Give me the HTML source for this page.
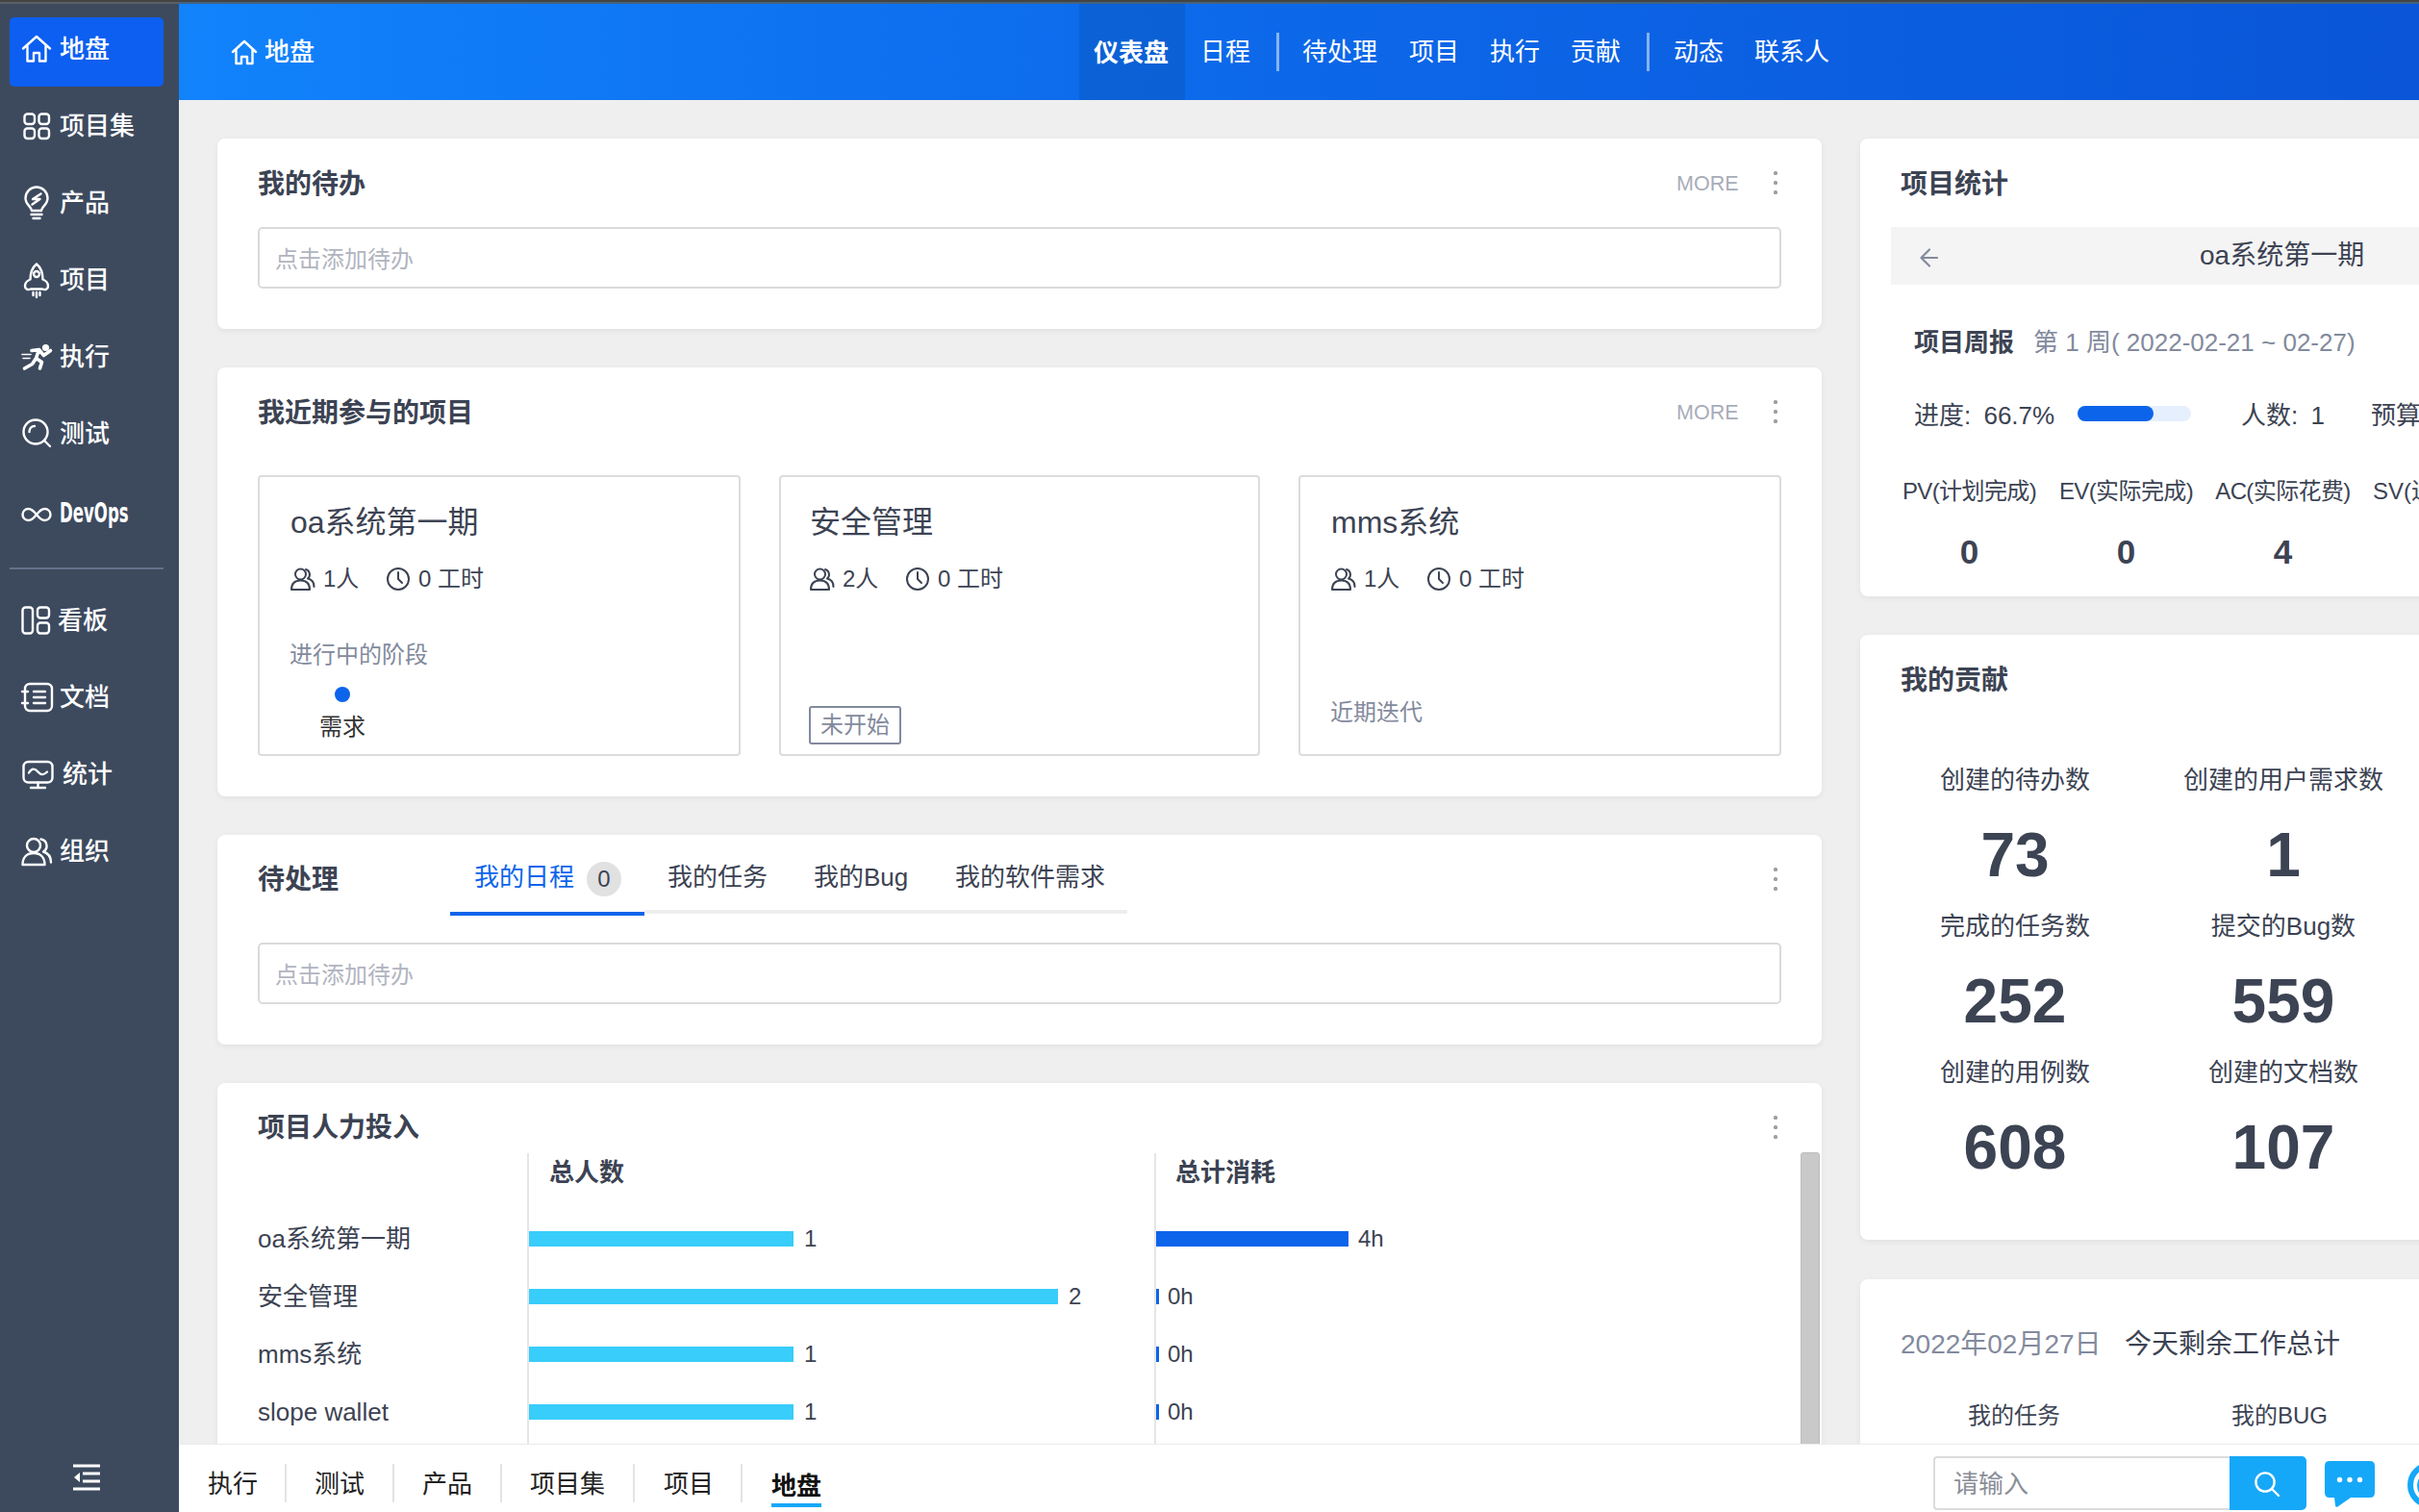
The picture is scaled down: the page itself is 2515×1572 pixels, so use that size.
<!DOCTYPE html>
<html lang="zh-CN">
<head>
<meta charset="utf-8">
<title>地盘</title>
<style>
*{box-sizing:border-box;margin:0;padding:0}
html,body{width:2515px;height:1572px;overflow:hidden;background:#efefef}
body{font-family:"Liberation Sans","Noto Sans CJK SC",sans-serif;color:#3c4353;font-size:26px;position:relative}
.abs{position:absolute;white-space:nowrap}
#topline{position:absolute;left:0;top:0;width:2515px;height:2px;background:#444442;z-index:20}
#topline:before{content:'';position:absolute;left:0;top:2px;width:186px;height:2px;background:#5b5f68}
#topline:after{content:'';position:absolute;left:186px;top:2px;width:2329px;height:1.5px;background:#44627f}
#side{position:absolute;left:0;top:0;width:186px;height:1572px;background:#3d4a5e;z-index:10}
#side .it{position:absolute;left:10px;width:160px;height:72px;border-radius:5px;color:#fff;font-size:26px;font-weight:500}
#side .it.act{background:#0c5ff0}
#side .it svg{position:absolute;left:12px;top:17px;width:32px;height:32px;overflow:visible;fill:none;stroke:#fff;stroke-width:2.4;stroke-linecap:round;stroke-linejoin:round}
#side .it span{position:absolute;left:52px;top:0;line-height:67px;white-space:nowrap}
#side .div{position:absolute;left:10px;top:590px;width:160px;height:2px;background:#64708a}
#head{position:absolute;left:186px;top:0;width:2329px;height:104px;background:linear-gradient(90deg,#1183fb 0%,#0d6cec 40%,#0a55d8 100%);z-index:5;color:#fff}
#head .t{position:absolute;top:2px;line-height:104px;font-size:26px;white-space:nowrap}
#head .sep{position:absolute;top:34px;width:3px;height:40px;background:rgba(255,255,255,.5)}
.panel{position:absolute;background:#fff;border-radius:8px;box-shadow:0 2px 6px rgba(0,0,0,.06)}
.ptitle{position:absolute;left:42px;top:28px;font-size:28px;font-weight:bold;line-height:40px;color:#3c4353;white-space:nowrap}
.more{position:absolute;font-size:21.5px;color:#a8acb9;line-height:40px;top:27px;letter-spacing:0}
.dots{position:absolute;width:6px}
.dots i{display:block;width:4.4px;height:4.4px;border-radius:1.5px;background:#9d9da6;margin-bottom:5.6px}
.inp{position:absolute;left:42px;width:1584px;height:64px;border:2px solid #dadada;border-radius:5px;background:#fff;font-size:24px;color:#b1b4c0;line-height:64px;padding-left:16px}
.card{position:absolute;top:112px;width:502px;height:292px;border:2px solid #dcdcdc;border-radius:4px;background:#fff}
.card .ct{position:absolute;left:32px;top:25px;font-size:32px;line-height:44px;color:#3c4353;white-space:nowrap}
.card .meta{position:absolute;left:32px;top:89px;font-size:24px;line-height:34px;color:#3c4353;white-space:nowrap}
.card svg{position:absolute;fill:none;stroke:#3c4353;stroke-width:2;stroke-linecap:round;stroke-linejoin:round}
.muted{color:#838a9d}
#bot{position:absolute;left:186px;top:1501px;width:2329px;height:71px;background:#fff;z-index:8;border-top:1.5px solid #ebebeb}
#bot .bt{position:absolute;top:15.5px;line-height:50px;font-size:26px;color:#222;white-space:nowrap}
#bot .bs{position:absolute;top:20px;width:2px;height:40px;background:#e3e3e3}
</style>
</head>
<body>
<div id="topline"></div>

<!-- SIDEBAR -->
<div id="side">
  <div class="it act" style="top:18px"><svg viewBox="0 0 32 32"><path d="M2 15.5 L16 3 L30 15.5 M6.5 12.5 V28.5 H13 V20 H19 V28.5 H25.5 V12.5"/></svg><span>地盘</span></div>
  <div class="it" style="top:98px"><svg viewBox="0 0 32 32"><rect x="3.5" y="3.5" width="10.5" height="10.5" rx="3"/><rect x="18.5" y="3.5" width="10.5" height="10.5" rx="3"/><rect x="3.5" y="18.5" width="10.5" height="10.5" rx="3"/><rect x="18.5" y="18.5" width="10.5" height="10.5" rx="3"/></svg><span>项目集</span></div>
  <div class="it" style="top:178px"><svg viewBox="0 0 32 32"><path d="M11 24 C11 20 4.5 18 4.5 11 A11.5 11.5 0 0 1 27.500 11 C27.500 18 21 20 21 24 Z M10.500 28 H21.500 M12.500 32 H19.500"/><path d="M20.500 6.500 L12 12 H19.500 L11.500 17.500"/></svg><span>产品</span></div>
  <div class="it" style="top:258px"><svg viewBox="0 0 32 32"><path d="M16 -0.500 C10.500 4 9.500 10 9.500 15.500 C5.500 17 4 19.500 4 22.500 C4 25.500 7 27 10 25.500 H22 C25 27 28 25.500 28 22.500 C28 19.500 26.500 17 22.500 15.500 C22.500 10 21.500 4 16 -0.500 Z"/><circle cx="16" cy="10" r="3"/><path d="M12.500 29 V32 M16 29 V34 M19.500 29 V32"/></svg><span>项目</span></div>
  <div class="it" style="top:338px"><svg viewBox="0 0 32 32"><circle cx="25.500" cy="6.500" r="3.600" fill="#fff" stroke="none"/><path d="M11 9.500 L18.500 8.500 L23.500 14.500 L30.500 9.500 M18.500 8.500 L15.500 17.500 L21.500 21.500 L19.500 28 M15.500 17.500 L11.500 23.500 L3.500 28" stroke-width="3.600"/><path d="M1 13.500 H10 M2 17.500 H9" stroke-width="1.600"/></svg><span>执行</span></div>
  <div class="it" style="top:418px"><svg viewBox="0 0 32 32"><circle cx="15" cy="14" r="12.500"/><path d="M24 23 L30 29 M8.500 14 C8.500 10.500 11 8 14 8"/></svg><span>测试</span></div>
  <div class="it" style="top:502px"><svg viewBox="0 0 32 32"><path d="M16 16 C12 11 9.500 10 7.500 10 A6 6 0 0 0 7.500 22 C9.500 22 12 21 16 16 C20 11 22.500 10 24.500 10 A6 6 0 0 1 24.500 22 C22.500 22 20 21 16 16 Z"/></svg><span style="font-family:'DejaVu Sans Condensed','Liberation Sans',sans-serif;font-weight:bold;font-size:29px;top:-2px;transform:scaleX(.635);transform-origin:0 50%">DevOps</span></div>
  <div class="div"></div>
  <div class="it" style="top:612px"><svg viewBox="0 0 32 32"><rect x="1.500" y="2.500" width="10.500" height="27" rx="3"/><rect x="17" y="2.500" width="12" height="11" rx="3"/><rect x="17" y="18.500" width="12" height="11" rx="3"/></svg><span style="left:50px">看板</span></div>
  <div class="it" style="top:692px"><svg viewBox="0 0 32 32"><rect x="4" y="2" width="28" height="28" rx="5"/><path d="M1 10 H7 M1 22 H7 M13 10 H25 M13 16 H25 M13 22 H25"/></svg><span>文档</span></div>
  <div class="it" style="top:772px"><svg viewBox="0 0 32 32"><rect x="2.500" y="3" width="30" height="21.500" rx="5"/><path d="M17.500 24.500 V29.500 M10 30 H25 M8 14.500 C11 9.500 14 9.500 17.500 13.500 C21 17.500 24 16.500 27 13.500"/></svg><span style="left:55px">统计</span></div>
  <div class="it" style="top:852px"><svg viewBox="0 0 32 32"><circle cx="13" cy="10" r="7"/><path d="M1.500 30 C1.500 22 6 18 13 18 C20 18 24.500 22 24.500 30 Z M20.500 3.500 A7 7 0 0 1 23 16.500 C28 18 31 21.500 31 27.500"/></svg><span>组织</span></div>
  <svg class="abs" style="left:76px;top:1522px" width="28" height="28" viewBox="0 0 28 28"><path d="M0 2 H28 M10 10 H28 M10 18 H28 M0 26 H28" stroke="#fff" stroke-width="3" fill="none"/><path d="M7 9 V19 L1 14 Z" fill="#fff"/></svg>
</div>

<!-- HEADER -->
<div id="head">
  <svg class="abs" style="left:54px;top:41px" width="28" height="27" viewBox="0 0 28 27" fill="none" stroke="#fff" stroke-width="2.4" stroke-linecap="round" stroke-linejoin="round"><path d="M2 13 L14 2 L26 13 M5.5 10.5 V25 H11 V18 H17 V25 H22.5 V10.5"/></svg>
  <div class="t" style="left:89px;top:2px;font-weight:500">地盘</div>
  <div style="position:absolute;left:936px;top:0;width:110px;height:104px;background:rgba(0,0,0,.09)"></div>
  <div class="t" style="left:951px;top:3px;font-weight:bold">仪表盘</div>
  <div class="t" style="left:1062px">日程</div>
  <div class="sep" style="left:1141px"></div>
  <div class="t" style="left:1168px">待处理</div>
  <div class="t" style="left:1279px">项目</div>
  <div class="t" style="left:1363px">执行</div>
  <div class="t" style="left:1447px">贡献</div>
  <div class="sep" style="left:1526px"></div>
  <div class="t" style="left:1554px">动态</div>
  <div class="t" style="left:1638px">联系人</div>
</div>

<!-- LEFT PANELS -->
<div class="panel" id="p1" style="left:226px;top:144px;width:1668px;height:198px">
  <div class="ptitle">我的待办</div>
  <div class="more" style="left:1517px">MORE</div>
  <div class="dots" style="left:1617.8px;top:34px"><i></i><i></i><i></i></div>
  <div class="inp" style="top:92px">点击添加待办</div>
</div>

<div class="panel" id="p2" style="left:226px;top:382px;width:1668px;height:446px">
  <div class="ptitle">我近期参与的项目</div>
  <div class="more" style="left:1517px">MORE</div>
  <div class="dots" style="left:1617.8px;top:34px"><i></i><i></i><i></i></div>
  <div class="card" style="left:42px">
    <div class="ct">oa系统第一期</div>
    <svg style="left:32px;top:93px" width="26" height="26" viewBox="0 0 26 26"><circle cx="10.5" cy="8" r="5.5"/><path d="M1 24 C1 17 5 14.5 10.5 14.5 C16 14.5 20 17 20 24 Z M16 3 A5.5 5.5 0 0 1 18 12.5 C22 13.5 24.5 16.5 24.5 21"/></svg>
    <div class="meta" style="left:66px">1人</div>
    <svg style="left:131px;top:93px" width="26" height="26" viewBox="0 0 26 26"><circle cx="13" cy="13" r="11"/><path d="M13 6 V13 L17 17"/></svg>
    <div class="meta" style="left:165px">0 工时</div>
    <div class="abs muted" style="left:31px;top:168px;font-size:24px;line-height:34px">进行中的阶段</div>
    <div class="abs" style="left:78px;top:218px;width:16px;height:16px;border-radius:50%;background:#0c64eb"></div>
    <div class="abs" style="left:62px;top:243px;font-size:24px;line-height:34px;color:#333">需求</div>
  </div>
  <div class="card" style="left:584px;width:500px">
    <div class="ct" style="left:30px">安全管理</div>
    <svg style="left:30px;top:93px" width="26" height="26" viewBox="0 0 26 26"><circle cx="10.5" cy="8" r="5.5"/><path d="M1 24 C1 17 5 14.5 10.5 14.5 C16 14.5 20 17 20 24 Z M16 3 A5.5 5.5 0 0 1 18 12.5 C22 13.5 24.5 16.5 24.5 21"/></svg>
    <div class="meta" style="left:64px">2人</div>
    <svg style="left:129px;top:93px" width="26" height="26" viewBox="0 0 26 26"><circle cx="13" cy="13" r="11"/><path d="M13 6 V13 L17 17"/></svg>
    <div class="meta" style="left:163px">0 工时</div>
    <div class="abs muted" style="left:29px;top:238px;height:40px;border:2px solid #838a9d;border-radius:3px;font-size:24px;line-height:36px;padding:0 10px">未开始</div>
  </div>
  <div class="card" style="left:1124px;width:502px">
    <div class="ct">mms系统</div>
    <svg style="left:32px;top:93px" width="26" height="26" viewBox="0 0 26 26"><circle cx="10.5" cy="8" r="5.5"/><path d="M1 24 C1 17 5 14.5 10.5 14.5 C16 14.5 20 17 20 24 Z M16 3 A5.5 5.5 0 0 1 18 12.5 C22 13.5 24.5 16.5 24.5 21"/></svg>
    <div class="meta" style="left:66px">1人</div>
    <svg style="left:131px;top:93px" width="26" height="26" viewBox="0 0 26 26"><circle cx="13" cy="13" r="11"/><path d="M13 6 V13 L17 17"/></svg>
    <div class="meta" style="left:165px">0 工时</div>
    <div class="abs muted" style="left:31px;top:228px;font-size:24px;line-height:34px">近期迭代</div>
  </div>
</div>

<div class="panel" id="p3" style="left:226px;top:868px;width:1668px;height:218px">
  <div class="ptitle" style="top:27px">待处理</div>
  <div class="abs" style="left:267px;top:23.5px;font-size:26px;line-height:40px;color:#0c64eb">我的日程</div>
  <div class="abs" style="left:384px;top:28px;width:36px;height:36px;border-radius:18px;background:#e1e1e1;color:#3c4353;font-size:24px;line-height:36px;text-align:center">0</div>
  <div class="abs" style="left:468px;top:23.5px;font-size:26px;line-height:40px">我的任务</div>
  <div class="abs" style="left:620px;top:23.5px;font-size:26px;line-height:40px">我的Bug</div>
  <div class="abs" style="left:767px;top:23.5px;font-size:26px;line-height:40px">我的软件需求</div>
  <div class="abs" style="left:444px;top:78px;width:502px;height:4px;background:#eee"></div>
  <div class="abs" style="left:242px;top:80px;width:202px;height:4px;background:#0c64eb"></div>
  <div class="dots" style="left:1617.8px;top:34px"><i></i><i></i><i></i></div>
  <div class="inp" style="top:112px">点击添加待办</div>
</div>

<div class="panel" id="p4" style="left:226px;top:1126px;width:1668px;height:460px">
  <div class="ptitle" style="top:27px">项目人力投入</div>
  <div class="dots" style="left:1617.8px;top:34px"><i></i><i></i><i></i></div>
  <div class="abs" style="left:322px;top:73px;width:2px;height:400px;background:#e6e6e6"></div>
  <div class="abs" style="left:974px;top:73px;width:2px;height:400px;background:#e6e6e6"></div>
  <div class="abs" style="left:345px;top:73px;font-size:26px;font-weight:bold;line-height:40px">总人数</div>
  <div class="abs" style="left:996px;top:73px;font-size:26px;font-weight:bold;line-height:40px">总计消耗</div>
  <!-- rows -->
  <div class="abs" style="left:42px;top:142px;line-height:40px">oa系统第一期</div>
  <div class="abs" style="left:324px;top:154px;width:275px;height:16px;background:#38cdfb"></div>
  <div class="abs" style="left:610px;top:142px;line-height:40px;font-size:24px">1</div>
  <div class="abs" style="left:976px;top:154px;width:200px;height:16px;background:#0c64eb"></div>
  <div class="abs" style="left:1186px;top:142px;line-height:40px;font-size:24px">4h</div>

  <div class="abs" style="left:42px;top:202px;line-height:40px">安全管理</div>
  <div class="abs" style="left:324px;top:214px;width:550px;height:16px;background:#38cdfb"></div>
  <div class="abs" style="left:885px;top:202px;line-height:40px;font-size:24px">2</div>
  <div class="abs" style="left:976px;top:214px;width:3px;height:16px;background:#0c64eb"></div>
  <div class="abs" style="left:988px;top:202px;line-height:40px;font-size:24px">0h</div>

  <div class="abs" style="left:42px;top:262px;line-height:40px">mms系统</div>
  <div class="abs" style="left:324px;top:274px;width:275px;height:16px;background:#38cdfb"></div>
  <div class="abs" style="left:610px;top:262px;line-height:40px;font-size:24px">1</div>
  <div class="abs" style="left:976px;top:274px;width:3px;height:16px;background:#0c64eb"></div>
  <div class="abs" style="left:988px;top:262px;line-height:40px;font-size:24px">0h</div>

  <div class="abs" style="left:42px;top:322px;line-height:40px">slope wallet</div>
  <div class="abs" style="left:324px;top:334px;width:275px;height:16px;background:#38cdfb"></div>
  <div class="abs" style="left:610px;top:322px;line-height:40px;font-size:24px">1</div>
  <div class="abs" style="left:976px;top:334px;width:3px;height:16px;background:#0c64eb"></div>
  <div class="abs" style="left:988px;top:322px;line-height:40px;font-size:24px">0h</div>
  <div class="abs" style="left:1646px;top:72px;width:20px;height:400px;background:#c9c9c9;border:1px solid #bdbdbd;border-radius:3px 3px 0 0"></div>
</div>

<!-- RIGHT PANELS -->
<div class="panel" id="r1" style="left:1934px;top:144px;width:700px;height:476px">
  <div class="ptitle">项目统计</div>
  <div class="abs" style="left:32px;top:92px;width:668px;height:60px;background:#f4f4f4"></div>
  <svg class="abs" style="left:62px;top:114px" width="20" height="20" viewBox="0 0 20 20" fill="none" stroke="#838a9d" stroke-width="2.2" stroke-linecap="round" stroke-linejoin="round"><path d="M18 10 H2 M10 1.500 L1.500 10 L10 18.500"/></svg>
  <div class="abs" style="left:353px;top:102px;font-size:28px;line-height:40px">oa系统第一期</div>
  <div class="abs" style="left:56px;top:192px;font-size:26px;font-weight:bold;line-height:40px">项目周报</div>
  <div class="abs muted" style="left:180px;top:192px;font-size:26px;line-height:40px">第 1 周( 2022-02-21 ~ 02-27)</div>
  <div class="abs" style="left:56px;top:268px;font-size:26px;line-height:40px;word-spacing:6px">进度: 66.7%</div>
  <div class="abs" style="left:226px;top:278px;width:118px;height:16px;border-radius:8px;background:#e5effd"></div>
  <div class="abs" style="left:226px;top:278px;width:79px;height:16px;border-radius:8px;background:#0c64eb"></div>
  <div class="abs" style="left:396px;top:268px;font-size:26px;line-height:40px;word-spacing:6px">人数: 1</div>
  <div class="abs" style="left:531px;top:268px;font-size:26px;line-height:40px;word-spacing:6px">预算: 待定</div>
  <div class="abs" style="left:32px;top:347px;width:163px;text-align:center;font-size:24px;letter-spacing:-.6px;line-height:40px">PV(计划完成)</div>
  <div class="abs" style="left:195px;top:347px;width:163px;text-align:center;font-size:24px;letter-spacing:-.6px;line-height:40px">EV(实际完成)</div>
  <div class="abs" style="left:358px;top:347px;width:163px;text-align:center;font-size:24px;letter-spacing:-.6px;line-height:40px">AC(实际花费)</div>
  <div class="abs" style="left:533px;top:347px;font-size:24px;line-height:40px">SV(进度偏差)</div>
  <div class="abs" style="left:32px;top:405px;width:163px;text-align:center;font-size:35px;font-weight:bold;line-height:50px">0</div>
  <div class="abs" style="left:195px;top:405px;width:163px;text-align:center;font-size:35px;font-weight:bold;line-height:50px">0</div>
  <div class="abs" style="left:358px;top:405px;width:163px;text-align:center;font-size:35px;font-weight:bold;line-height:50px">4</div>
</div>

<div class="panel" id="r2" style="left:1934px;top:660px;width:700px;height:629px">
  <div class="ptitle">我的贡献</div>
  <div class="abs" style="left:21px;top:131px;width:280px;text-align:center;line-height:40px">创建的待办数</div>
  <div class="abs" style="left:300px;top:131px;width:280px;text-align:center;line-height:40px">创建的用户需求数</div>
  <div class="abs" style="left:21px;top:189px;width:280px;text-align:center;font-size:64px;font-weight:bold;line-height:81px">73</div>
  <div class="abs" style="left:300px;top:189px;width:280px;text-align:center;font-size:64px;font-weight:bold;line-height:81px">1</div>
  <div class="abs" style="left:21px;top:283px;width:280px;text-align:center;line-height:40px">完成的任务数</div>
  <div class="abs" style="left:300px;top:283px;width:280px;text-align:center;line-height:40px">提交的Bug数</div>
  <div class="abs" style="left:21px;top:341px;width:280px;text-align:center;font-size:64px;font-weight:bold;line-height:81px">252</div>
  <div class="abs" style="left:300px;top:341px;width:280px;text-align:center;font-size:64px;font-weight:bold;line-height:81px">559</div>
  <div class="abs" style="left:21px;top:435px;width:280px;text-align:center;line-height:40px">创建的用例数</div>
  <div class="abs" style="left:300px;top:435px;width:280px;text-align:center;line-height:40px">创建的文档数</div>
  <div class="abs" style="left:21px;top:493px;width:280px;text-align:center;font-size:64px;font-weight:bold;line-height:81px">608</div>
  <div class="abs" style="left:300px;top:493px;width:280px;text-align:center;font-size:64px;font-weight:bold;line-height:81px">107</div>
</div>

<div class="panel" id="r3" style="left:1934px;top:1330px;width:700px;height:300px">
  <div class="abs muted" style="left:42px;top:48px;font-size:28px;line-height:40px">2022年02月27日</div>
  <div class="abs" style="left:275px;top:48px;font-size:28px;line-height:40px">今天剩余工作总计</div>
  <div class="abs" style="left:20px;top:122px;width:280px;text-align:center;font-size:24px;line-height:40px">我的任务</div>
  <div class="abs" style="left:296px;top:122px;width:280px;text-align:center;font-size:24px;line-height:40px">我的BUG</div>
</div>

<!-- BOTTOM BAR -->
<div id="bot">
  <div class="bt" style="left:30px">执行</div><div class="bs" style="left:110px"></div>
  <div class="bt" style="left:141px">测试</div><div class="bs" style="left:222px"></div>
  <div class="bt" style="left:253px">产品</div><div class="bs" style="left:334px"></div>
  <div class="bt" style="left:365px">项目集</div><div class="bs" style="left:472px"></div>
  <div class="bt" style="left:504px">项目</div><div class="bs" style="left:584px"></div>
  <div class="bt" style="left:616px;top:17.5px;font-weight:bold;color:#111">地盘</div>
  <div class="abs" style="left:616px;top:61px;width:52px;height:4px;background:#16a8f8"></div>
  <div class="abs" style="left:1824px;top:12px;width:309px;height:56px;border:2px solid #dcdcdc;border-right:none;border-radius:4px 0 0 4px;font-size:26px;color:#8a8e99;line-height:54px;padding-left:19px">请输入</div>
  <div class="abs" style="left:2132px;top:12px;width:80px;height:56px;background:#16a8f8;border-radius:0 5px 5px 0"></div>
  <svg class="abs" style="left:2157px;top:26px" width="30" height="30" viewBox="0 0 30 30" fill="none" stroke="#fff" stroke-width="2.4" stroke-linecap="round"><circle cx="12" cy="13" r="9.600"/><path d="M19 20 L26 27"/></svg>
  <svg class="abs" style="left:2231px;top:17px" width="52" height="49" viewBox="0 0 52 49"><path d="M5 0 H47 Q52 0 52 5 V33 Q52 38 47 38 H27 L13.500 47.500 Q11.500 48.500 11 46.500 L10 38 H5 Q0 38 0 33 V5 Q0 0 5 0 Z" fill="#16a8f8"/><circle cx="15.500" cy="19.500" r="2.700" fill="#fff"/><circle cx="26" cy="19.500" r="2.700" fill="#fff"/><circle cx="36.500" cy="19.500" r="2.700" fill="#fff"/></svg>
  <svg class="abs" style="left:2317px;top:18px;overflow:visible" width="48" height="48" viewBox="0 0 48 48" fill="none" stroke="#16a8f8"><circle cx="24" cy="24" r="21" stroke-width="6"/><path d="M16 34 C10 26 12 16 22 12" stroke-width="5"/></svg>
</div>
</body>
</html>
